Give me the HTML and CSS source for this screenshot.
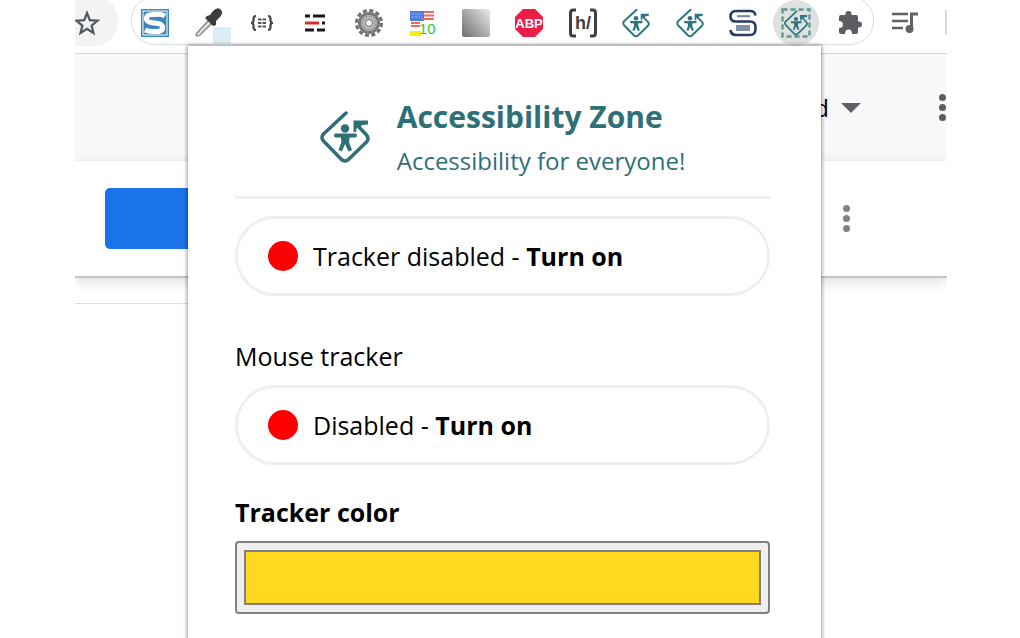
FILE: index.html
```html
<!DOCTYPE html>
<html lang="en">
<head>
  <meta charset="UTF-8">
  <meta name="viewport" content="width=device-width, initial-scale=1.0">
  <title>Accessibility Zone</title>
  <link rel="stylesheet" href="styles.css">
</head>
<body>
  <!-- shared logo shape -->
  <svg class="sprite" aria-hidden="true">
    <symbol id="logo" viewBox="0 0 50 54">
      <g fill="none" stroke="currentColor" stroke-linecap="round" stroke-linejoin="round">
        <path d="M26 3 L3.500 24 Q0.500 27.500 3.500 31 L21 49 Q25 53 29 49 L46.500 32 Q49.500 28.500 46.500 25 L37 15" stroke-width="3.500"/>
        <path d="M16 25.500 H35" stroke-width="4"/>
      </g>
      <path d="M33.500 10.500 H48 V14.500 L42 15 L40 18 L37 17 L36 22 H33.500 Z" fill="currentColor"/>
      <circle cx="25" cy="18.500" r="4.200" fill="currentColor"/>
      <path d="M20.500 25 H30 L29 32 L32 40 L28.500 41.500 L25 34 L22 41.500 L18.500 40 L21.500 32 Z" fill="currentColor"/>
    </symbol>
  </svg>

  <div class="browser">
    <div class="toolbar">
      <button class="star" aria-label="Bookmark">
        <svg width="26" height="26" viewBox="0 0 26 26"><path d="M12 3 L14.800 10.200 L22.500 10.700 L16.600 15.600 L18.500 23 L12 18.900 L5.500 23 L7.400 15.600 L1.500 10.700 L9.200 10.200 Z" fill="none" stroke="#55595e" stroke-width="2.200"/></svg>
      </button>

      <div class="extensions">
        <button aria-label="Stylish">
          <svg width="30" height="30" viewBox="0 0 30 30"><rect x="1" y="1" width="28" height="28" fill="#3d85bd"/><rect x="3" y="3" width="24" height="24" fill="none" stroke="#fff" stroke-width="1"/><path d="M25 8 C21 5.500 17 6.500 13 6.500 C4 6.500 5 14 11 14.500 L18 15.500 C25 16.500 24 23.500 17 23.500 C12 23.500 9 24 5 22" fill="none" stroke="#fff" stroke-width="5"/></svg>
        </button>
        <button class="picker" aria-label="Color picker">
          <svg width="34" height="34" viewBox="0 0 34 34"><path d="M6 27 L18 14 L21 17 L9 29 Q6 31 5 29 Z" fill="#e2e2e2" stroke="#8a8a8a" stroke-width="1.500"/><path d="M16 10 L19 9 L22 5 Q27 0 30 4 Q33 7 28 12 L25 15 L25 19 L22 20 L14 12 Z" fill="#3c3c3c"/></svg>
          <span class="swatch"></span>
        </button>
        <button aria-label="Formatter">
          <svg width="24" height="18" viewBox="0 0 24 18"><path d="M6 2 Q3.500 2 3.500 5 V6.500 Q3.500 9 1 9 Q3.500 9 3.500 11.500 V13 Q3.500 16 6 16 M18 2 Q20.500 2 20.500 5 V6.500 Q20.500 9 23 9 Q20.500 9 20.500 11.500 V13 Q20.500 16 18 16" fill="none" stroke="#444" stroke-width="2.200"/><path d="M8 5.500 H16 M8 9 H16 M8 12.500 H16" stroke="#555" stroke-width="1.800" stroke-dasharray="3.500 1"/></svg>
        </button>
        <button aria-label="Outline">
          <svg width="22" height="18" viewBox="0 0 22 18"><path d="M1 2 H6 M9 2 H21 M18 9 H21 M1 16 H10 M13 16 H21" stroke="#181818" stroke-width="3"/><path d="M1 9 H15" stroke="#e3282c" stroke-width="3"/></svg>
        </button>
        <button aria-label="Settings">
          <svg width="30" height="30" viewBox="0 0 30 30"><circle cx="15" cy="15" r="12.500" fill="none" stroke="#6f6f6f" stroke-width="3" stroke-dasharray="4 2.540"/><circle cx="15" cy="15" r="9.500" fill="#c5c5c5" stroke="#777" stroke-width="3"/><circle cx="15" cy="15" r="6.500" fill="none" stroke="#a4a4a4" stroke-width="2"/><circle cx="15" cy="15" r="3.500" fill="#f4f4f4" stroke="#666"/></svg>
        </button>
        <button aria-label="Locale">
          <svg width="28" height="28" viewBox="0 0 28 28"><rect x="2" y="2" width="14" height="10" fill="#4a7fe0"/><path d="M16 3 H26 M16 6.500 H26 M13 10 H26 M3 14 H12 M3 17 H12" stroke="#e86a64" stroke-width="2"/><path d="M4 5 H14 M4 8 H14" stroke="#9dbcf4" stroke-dasharray="2 1"/><rect x="2" y="22" width="11" height="5" fill="#f7ed12"/><text x="11" y="25" class="glyph-ten">10</text></svg>
        </button>
        <button aria-label="Gradient">
          <svg width="28" height="28" viewBox="0 0 28 28"><defs><linearGradient id="grey" x1="0" y1="1" x2="1" y2="0.200"><stop offset="0" stop-color="#6e6e6e"/><stop offset="0.500" stop-color="#a5a5a5"/><stop offset="1" stop-color="#e0e0e0"/></linearGradient></defs><rect width="28" height="28" rx="2" fill="url(#grey)"/></svg>
        </button>
        <button aria-label="Adblock Plus">
          <svg width="30" height="30" viewBox="0 0 30 30"><path d="M9 1 H21 L29 9 V21 L21 29 H9 L1 21 V9 Z" fill="#ed1e45"/><text x="15" y="20" text-anchor="middle" class="glyph-abp">ABP</text></svg>
        </button>
        <button aria-label="Headings">
          <svg width="30" height="30" viewBox="0 0 30 30"><path d="M8 2 H5 Q2.500 2 2.500 5 V25 Q2.500 28 5 28 H8 M22 2 H25 Q27.500 2 27.500 5 V25 Q27.500 28 25 28 H22" fill="none" stroke="#3f3f3f" stroke-width="3"/><text x="15" y="21" text-anchor="middle" class="glyph-h">h/</text></svg>
        </button>
        <button class="teal" aria-label="Accessibility Zone"><svg width="28" height="30"><use href="#logo"/></svg></button>
        <button class="teal" aria-label="Accessibility Zone"><svg width="28" height="30"><use href="#logo"/></svg></button>
        <button aria-label="Notes">
          <svg width="28" height="28" viewBox="0 0 28 28"><path d="M26.500 6.500 Q26 2 21 2 H7 Q1.500 2 1.500 7.500 Q1.500 12.500 7 12.500 H21 Q26.500 12.500 26.500 18 V20 Q26.500 26 21 26 H7 Q2 26 1.500 21" fill="none" stroke="#293c5e" stroke-width="2.600"/><path d="M8 7.200 H21" stroke="#73859e" stroke-width="2"/><rect x="7" y="16" width="14" height="6" fill="#8291a7"/></svg>
        </button>
        <button class="teal active" aria-label="Accessibility Zone">
          <svg width="30" height="30" viewBox="0 0 30 30"><rect x="1.500" y="1.500" width="27" height="27" fill="none" stroke="#5c9997" stroke-width="2.500" stroke-dasharray="5 3"/><use href="#logo" x="2" y="2" width="26" height="26"/></svg>
        </button>
        <button aria-label="Extensions">
          <svg width="26" height="26" viewBox="0 0 26 26"><path d="M2 7 Q2 5 4 5 H8.500 Q8 1 11.500 1 Q15 1 14.500 5 H19 Q21 5 21 7 V11.500 Q25 11 25 14.500 Q25 18 21 17.500 V22 Q21 24 19 24 H15 Q15 19.500 11.500 19.500 Q8 19.500 8 24 H4 Q2 24 2 22 V18 Q6 18 6 14.500 Q6 11 2 11 Z" fill="#5a5d61"/></svg>
        </button>
      </div>

      <button class="queue" aria-label="Media controls">
        <svg width="28" height="24" viewBox="0 0 28 24"><path d="M1 4 H17 M1 11 H17 M1 18 H12" stroke="#5f6368" stroke-width="2.500"/><path d="M20.500 18 V4 H27" fill="none" stroke="#5f6368" stroke-width="3"/><circle cx="18.500" cy="19" r="4" fill="#5f6368"/></svg>
      </button>
      <span class="divider"></span>
    </div>

    <div class="page-header">
      <span class="account">d</span>
      <svg class="caret" width="20" height="10" viewBox="0 0 20 10"><path d="M0 0 H20 L10 10 Z" fill="#5f6368"/></svg>
      <button class="dots dark" aria-label="More"><span></span><span></span><span></span></button>
    </div>

    <div class="page-actions">
      <button class="primary" aria-label="Create"></button>
      <button class="dots" aria-label="Options"><span></span><span></span><span></span></button>
    </div>

    <div class="page-body"></div>

    <div class="popup">
      <div class="popup-header">
        <svg class="logo" width="50" height="54"><use href="#logo"/></svg>
        <div>
          <h1>Accessibility Zone</h1>
          <p>Accessibility for everyone!</p>
        </div>
      </div>

      <button class="toggle"><span class="status"></span><span>Tracker disabled - <b>Turn on</b></span></button>

      <div class="label" id="mouseLabel">Mouse tracker</div>
      <button class="toggle" aria-describedby="mouseLabel"><span class="status"></span><span>Disabled - <b>Turn on</b></span></button>

      <label class="label bold" for="trackerColor">Tracker color</label>
      <input type="color" id="trackerColor" value="#ffd91f">
    </div>
  </div>
</body>
</html>
```
FILE: styles.css
```css
* {
  box-sizing: border-box;
}

body {
  margin: 0;
  background: #fff;
  color: #000;
  font-family: "Open Sans", "Noto Sans", sans-serif;
}

button {
  padding: 0;
  border: none;
  background: none;
  color: inherit;
  font: inherit;
  cursor: pointer;
}

.sprite {
  position: absolute;
  width: 0;
  height: 0;
}

.browser {
  position: relative;
  height: 100vh;
  margin: 0 73px 0 75px;
  overflow: hidden;
}

/* toolbar */
.toolbar {
  display: flex;
  align-items: flex-start;
  height: 54px;
  border-bottom: 1px solid #d5d7d9;
}

.star {
  display: flex;
  align-items: center;
  width: 43px;
  height: 50px;
  margin: -4px 13px 0 0;
  padding-top: 4px;
  background: #f1f3f4;
  border-radius: 0 24px 24px 0;
}

.extensions {
  display: flex;
  flex: 1;
  justify-content: space-between;
  align-items: center;
  height: 49px;
  margin-top: -4px;
  padding-top: 4px;
  border: 1px solid #dadce0;
  border-radius: 24px;
}

.extensions button {
  display: flex;
  align-items: center;
  justify-content: center;
  width: 46px;
  height: 46px;
  border-radius: 50%;
}

.teal {
  color: #2f7580;
}

.extensions .active {
  background: #e0e0e0;
}

.picker {
  position: relative;
}

.swatch {
  position: absolute;
  right: 0;
  bottom: 1px;
  width: 18px;
  height: 18px;
  background: #deedf4;
}

.glyph-ten {
  font: 15px "Liberation Sans", sans-serif;
  fill: #2fc92f;
}

.glyph-abp {
  font: bold 13px "Liberation Sans", sans-serif;
  fill: #fff;
}

.glyph-h {
  font: bold 18px "Liberation Sans", sans-serif;
  fill: #3f3f3f;
}

.queue {
  display: flex;
  align-items: center;
  height: 44px;
  margin: 0 26px 0 17px;
}

.divider {
  width: 2px;
  height: 24px;
  margin-top: 10px;
  background: #d5d7d9;
}

/* page behind the popup */
.page-header {
  display: flex;
  align-items: center;
  justify-content: flex-end;
  height: 107px;
  background: #f8f9fb;
}

.account {
  font-size: 24px;
}

.caret {
  margin: 0 78px 0 12px;
}

.dots {
  display: flex;
  flex-direction: column;
  gap: 3px;
  width: 8px;
}

.dots span {
  width: 7px;
  height: 7px;
  border-radius: 50%;
  background: #808386;
}

.dots.dark span {
  background: #5a5d61;
}

.page-actions {
  display: flex;
  align-items: center;
  justify-content: space-between;
  padding: 27px 96px 27px 30px;
  border-bottom: 2px solid #c3c6c6;
  box-shadow: 0 3px 12px rgba(0, 0, 0, 0.15);
}

.primary {
  width: 160px;
  height: 61px;
  background: #1a73e8;
  border-radius: 5px;
}

.page-body {
  width: 160px;
  height: 26px;
  border-bottom: 1px solid #dadce0;
}

/* popup */
.popup {
  position: absolute;
  top: 46px;
  right: 126px;
  bottom: -20px;
  left: 113px;
  padding: 0 51px 0 47px;
  background: #fff;
  box-shadow: 0 0 4px 1px rgba(0, 0, 0, 0.4);
  font-size: 25px;
  line-height: 36px;
}

.popup-header {
  display: flex;
  align-items: center;
  justify-content: center;
  gap: 27px;
  margin-bottom: 17px;
  padding: 47px 0 15px;
  border-bottom: 3px solid #efefef;
  color: #2f6f76;
}

.popup-header h1 {
  margin: 0;
  font-size: 30px;
  line-height: 48px;
}

.popup-header p {
  margin: 0;
  font-size: 24px;
  line-height: 40px;
}

.toggle {
  display: flex;
  align-items: center;
  gap: 15px;
  width: 100%;
  height: 80px;
  padding: 0 30px;
  border: 3px solid #efefef;
  border-radius: 40px;
}

.status {
  width: 30px;
  height: 30px;
  border-radius: 50%;
  background: #f00;
}

.label {
  display: block;
  margin-top: 42px;
  margin-bottom: 11px;
}

.bold {
  margin-top: 29px;
  font-weight: bold;
}

input[type="color"] {
  display: block;
  width: 100%;
  height: 73px;
  padding: 7px;
  border: 2px solid #808080;
  border-radius: 4px;
  background: #efefef;
}

input[type="color"]::-webkit-color-swatch-wrapper {
  padding: 0;
}

input[type="color"]::-webkit-color-swatch {
  border: 2px solid #808080;
  border-radius: 0;
}
```
